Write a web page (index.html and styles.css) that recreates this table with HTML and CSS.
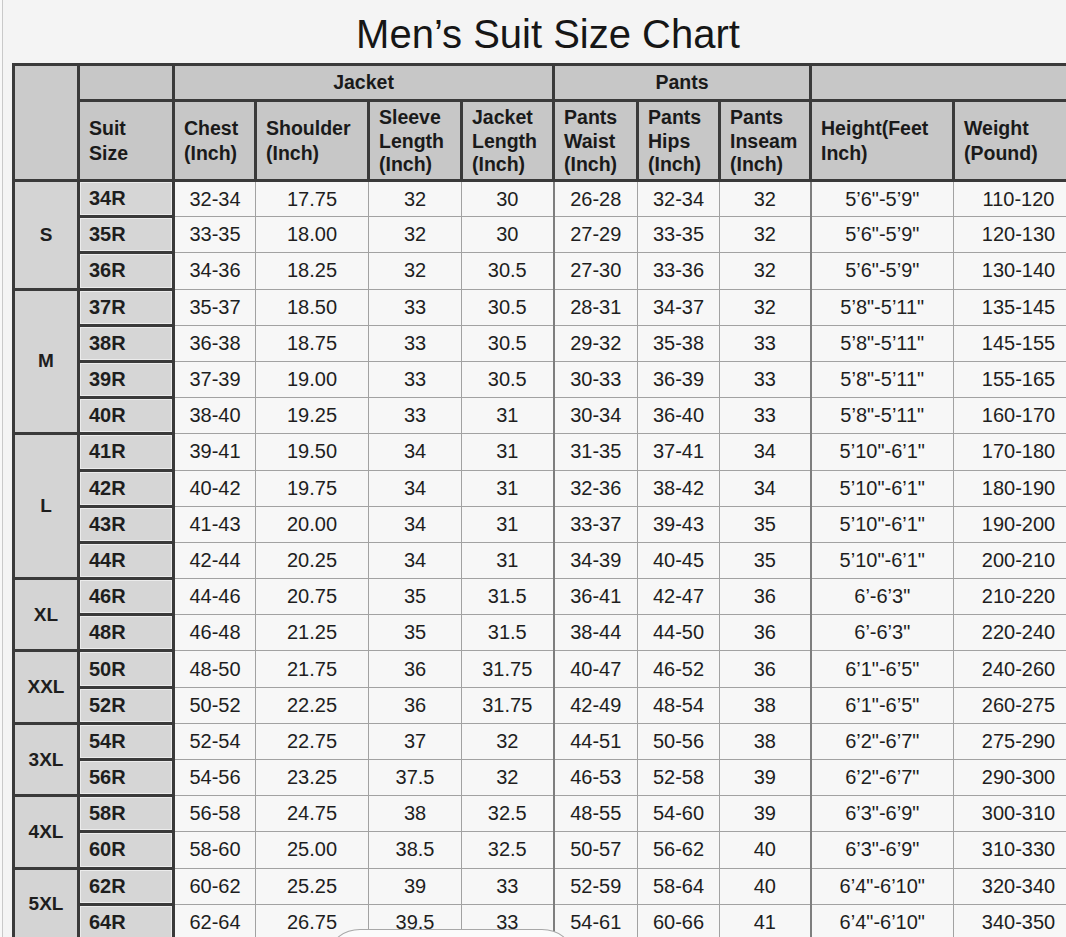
FILE: index.html
```html
<!DOCTYPE html>
<html lang="en">
<head>
<meta charset="utf-8">
<title>Men's Suit Size Chart</title>
<link rel="stylesheet" href="styles.css">
</head>
<body>
<div class="page">
  <h1 class="title">Men’s Suit Size Chart</h1>
  <table class="chart">
    <colgroup>
      <col class="c-grp"><col class="c-size"><col class="c-chest"><col class="c-shoulder"><col class="c-sleeve"><col class="c-jlen"><col class="c-waist"><col class="c-hips"><col class="c-inseam"><col class="c-height"><col class="c-weight">
    </colgroup>
    <thead>
      <tr class="h1">
        <th class="corner" rowspan="2"></th>
        <th></th>
        <th class="group" colspan="4">Jacket</th>
        <th class="group" colspan="3">Pants</th>
        <th colspan="2"></th>
      </tr>
      <tr class="h2">
        <th>Suit<br>Size</th>
        <th>Chest<br>(Inch)</th>
        <th>Shoulder<br>(Inch)</th>
        <th class="tri">Sleeve<br>Length<br>(Inch)</th>
        <th class="tri">Jacket<br>Length<br>(Inch)</th>
        <th class="tri">Pants<br>Waist<br>(Inch)</th>
        <th class="tri">Pants<br>Hips<br>(Inch)</th>
        <th class="tri">Pants<br>Inseam<br>(Inch)</th>
        <th>Height(Feet<br>Inch)</th>
        <th>Weight<br>(Pound)</th>
      </tr>
    </thead>
    <tbody>
      <tr><td class="grp" rowspan="3">S</td><td class="size">34R</td><td>32-34</td><td>17.75</td><td>32</td><td>30</td><td class="sep">26-28</td><td>32-34</td><td>32</td><td class="sep">5’6"-5’9"</td><td>110-120</td></tr>
      <tr><td class="size">35R</td><td>33-35</td><td>18.00</td><td>32</td><td>30</td><td class="sep">27-29</td><td>33-35</td><td>32</td><td class="sep">5’6"-5’9"</td><td>120-130</td></tr>
      <tr><td class="size">36R</td><td>34-36</td><td>18.25</td><td>32</td><td>30.5</td><td class="sep">27-30</td><td>33-36</td><td>32</td><td class="sep">5’6"-5’9"</td><td>130-140</td></tr>
      <tr><td class="grp" rowspan="4">M</td><td class="size">37R</td><td>35-37</td><td>18.50</td><td>33</td><td>30.5</td><td class="sep">28-31</td><td>34-37</td><td>32</td><td class="sep">5’8"-5’11"</td><td>135-145</td></tr>
      <tr><td class="size">38R</td><td>36-38</td><td>18.75</td><td>33</td><td>30.5</td><td class="sep">29-32</td><td>35-38</td><td>33</td><td class="sep">5’8"-5’11"</td><td>145-155</td></tr>
      <tr><td class="size">39R</td><td>37-39</td><td>19.00</td><td>33</td><td>30.5</td><td class="sep">30-33</td><td>36-39</td><td>33</td><td class="sep">5’8"-5’11"</td><td>155-165</td></tr>
      <tr><td class="size">40R</td><td>38-40</td><td>19.25</td><td>33</td><td>31</td><td class="sep">30-34</td><td>36-40</td><td>33</td><td class="sep">5’8"-5’11"</td><td>160-170</td></tr>
      <tr><td class="grp" rowspan="4">L</td><td class="size">41R</td><td>39-41</td><td>19.50</td><td>34</td><td>31</td><td class="sep">31-35</td><td>37-41</td><td>34</td><td class="sep">5’10"-6’1"</td><td>170-180</td></tr>
      <tr><td class="size">42R</td><td>40-42</td><td>19.75</td><td>34</td><td>31</td><td class="sep">32-36</td><td>38-42</td><td>34</td><td class="sep">5’10"-6’1"</td><td>180-190</td></tr>
      <tr><td class="size">43R</td><td>41-43</td><td>20.00</td><td>34</td><td>31</td><td class="sep">33-37</td><td>39-43</td><td>35</td><td class="sep">5’10"-6’1"</td><td>190-200</td></tr>
      <tr><td class="size">44R</td><td>42-44</td><td>20.25</td><td>34</td><td>31</td><td class="sep">34-39</td><td>40-45</td><td>35</td><td class="sep">5’10"-6’1"</td><td>200-210</td></tr>
      <tr><td class="grp" rowspan="2">XL</td><td class="size">46R</td><td>44-46</td><td>20.75</td><td>35</td><td>31.5</td><td class="sep">36-41</td><td>42-47</td><td>36</td><td class="sep">6’-6’3"</td><td>210-220</td></tr>
      <tr><td class="size">48R</td><td>46-48</td><td>21.25</td><td>35</td><td>31.5</td><td class="sep">38-44</td><td>44-50</td><td>36</td><td class="sep">6’-6’3"</td><td>220-240</td></tr>
      <tr><td class="grp" rowspan="2">XXL</td><td class="size">50R</td><td>48-50</td><td>21.75</td><td>36</td><td>31.75</td><td class="sep">40-47</td><td>46-52</td><td>36</td><td class="sep">6’1"-6’5"</td><td>240-260</td></tr>
      <tr><td class="size">52R</td><td>50-52</td><td>22.25</td><td>36</td><td>31.75</td><td class="sep">42-49</td><td>48-54</td><td>38</td><td class="sep">6’1"-6’5"</td><td>260-275</td></tr>
      <tr><td class="grp" rowspan="2">3XL</td><td class="size">54R</td><td>52-54</td><td>22.75</td><td>37</td><td>32</td><td class="sep">44-51</td><td>50-56</td><td>38</td><td class="sep">6’2"-6’7"</td><td>275-290</td></tr>
      <tr><td class="size">56R</td><td>54-56</td><td>23.25</td><td>37.5</td><td>32</td><td class="sep">46-53</td><td>52-58</td><td>39</td><td class="sep">6’2"-6’7"</td><td>290-300</td></tr>
      <tr><td class="grp" rowspan="2">4XL</td><td class="size">58R</td><td>56-58</td><td>24.75</td><td>38</td><td>32.5</td><td class="sep">48-55</td><td>54-60</td><td>39</td><td class="sep">6’3"-6’9"</td><td>300-310</td></tr>
      <tr><td class="size">60R</td><td>58-60</td><td>25.00</td><td>38.5</td><td>32.5</td><td class="sep">50-57</td><td>56-62</td><td>40</td><td class="sep">6’3"-6’9"</td><td>310-330</td></tr>
      <tr><td class="grp" rowspan="2">5XL</td><td class="size">62R</td><td>60-62</td><td>25.25</td><td>39</td><td>33</td><td class="sep">52-59</td><td>58-64</td><td>40</td><td class="sep">6’4"-6’10"</td><td>320-340</td></tr>
      <tr><td class="size">64R</td><td>62-64</td><td>26.75</td><td>39.5</td><td>33</td><td class="sep">54-61</td><td>60-66</td><td>41</td><td class="sep">6’4"-6’10"</td><td>340-350</td></tr>
    </tbody>
  </table>
  <div class="overlay-pill"></div>
</div>
</body>
</html>
```

FILE: styles.css
```css
html, body {
  margin: 0;
  padding: 0;
  overflow: hidden;
  height: 100%;
  background: #f8f8f8;
}

body {
  font-family: "Liberation Sans", Arial, sans-serif;
  color: #1c1c1c;
}

.page {
  position: relative;
  margin-left: 2px;
  border-left: 1px solid #c9c9c9;
  min-height: 100%;
  background: #f4f4f4;
  padding-left: 9px;
}

.title {
  margin: 0;
  padding-top: 11px;
  padding-left: 0;
  width: 1072px;
  font-size: 40px;
  line-height: 46px;
  font-weight: normal;
  text-align: center;
  color: #161616;
  height: 52px;
}

.chart {
  border-collapse: collapse;
  table-layout: fixed;
  width: 1071px;
  border-top: 3px solid #3a3a3a;
  border-left: 3px solid #3a3a3a;
}

.c-grp { width: 65px; }
.c-size { width: 95px; }
.c-chest { width: 82px; }
.c-shoulder { width: 113px; }
.c-sleeve { width: 93px; }
.c-jlen { width: 92px; }
.c-waist { width: 84px; }
.c-hips { width: 82px; }
.c-inseam { width: 91px; }
.c-height { width: 143px; }
.c-weight { width: 130px; }

.chart th {
  background: #c7c7c7;
  border: 3px solid #3a3a3a;
  font-size: 19.5px;
  font-weight: bold;
  text-align: left;
  padding: 0 0 0 9px;
  line-height: 25px;
  color: #1a1a1a;
  vertical-align: middle;
}

.chart th.tri {
  line-height: 23.5px;
  padding-top: 2px;
}

.chart th.corner {
  background: #cbcbcb;
}

.chart th.group {
  text-align: center;
  padding: 0;
}

.chart .h1 { height: 36px; }
.chart .h2 { height: 80px; }

.chart tbody tr { height: 36.2px; }

.chart td {
  border: 1px solid #a2a2a2;
  background: #f7f7f7;
  font-size: 20px;
  text-align: center;
  padding: 0;
  color: #1e1e1e;
  vertical-align: middle;
}

.chart td.sep {
  border-left: 2px solid #7e7e7e;
}

.chart td.grp {
  background: #d4d4d4;
  border: 3px solid #3a3a3a;
  font-weight: bold;
  font-size: 19px;
}

.chart td.size {
  background: #d6d6d6;
  border: 3px solid #3a3a3a;
  box-shadow: inset 0 0 0 1px #ececec;
  font-weight: bold;
  text-align: left;
  padding-left: 9px;
  font-size: 20px;
}

.overlay-pill {
  position: absolute;
  left: 327px;
  top: 929px;
  width: 240px;
  height: 60px;
  background: #fbfbfb;
  border: 1px solid #a8a8a8;
  border-radius: 30px / 24px;
}
```
